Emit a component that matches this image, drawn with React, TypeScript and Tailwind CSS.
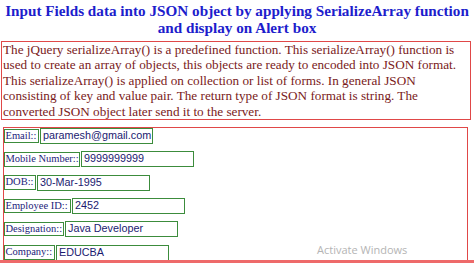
const intro = [
  'The jQuery serializeArray() is a predefined function. This serializeArray() function is',
  'used to create an array of objects, this objects are ready to encoded into JSON format.',
  'This serializeArray() is applied on collection or list of forms. In general JSON',
  'consisting of key and value pair. The return type of JSON format is string. The',
  'converted JSON object later send it to the server.',
];

// label boxes are sized to the original page's rendering
const fields = [
  { label: 'Email::', value: 'paramesh@gmail.com', w: 'w-[35px]' },
  { label: 'Mobile Number::', value: '9999999999', w: 'w-[76px]' },
  { label: 'DOB::', value: '30-Mar-1995', w: 'w-[32px]' },
  { label: 'Employee ID::', value: '2452', w: 'w-[67px]' },
  { label: 'Designation::', value: 'Java Developer', w: 'w-[60px]' },
  { label: 'Company::', value: 'EDUCBA', w: 'w-[51px]' },
];

export default function App() {
  return (
    <div className="relative w-[474px] h-[263px] overflow-hidden bg-white font-['Liberation_Serif',serif]">
      <h1 className="text-center font-bold text-[15.2px] leading-[17px] text-[#1d1dcc] pt-[2px]">
        Input Fields data into JSON object by applying SerializeArray function
        <br />
        and display on Alert box
      </h1>

      <div className="mt-[5px] ml-[1px] w-[470px] border-[1.5px] border-[#e04848] px-[1px] text-[13.2px] leading-[15.4px] text-[#7a1a1a]">
        {intro.map((line) => (
          <div key={line} className="whitespace-nowrap">{line}</div>
        ))}
      </div>

      <div className="mt-[7px] ml-[3px] w-[465px] h-[140px] border-[1.5px] border-[#e04848] flex flex-col gap-[7.3px]">
        {fields.map((f) => (
          <div key={f.label} className="flex items-center gap-[1px]">
            <span className={`${f.w} shrink-0 border-[1.5px] border-[#3c8c3c] px-[0.5px] whitespace-nowrap text-[10.5px] leading-[12.5px] text-[#23237a]`}>
              {f.label}
            </span>
            <span className="w-[113px] h-[16px] shrink-0 border-[1.5px] border-[#3c8c3c] px-[2px] font-['Liberation_Sans',sans-serif] text-[10.8px] leading-[13px] text-[#1a1a70] whitespace-nowrap">
              {f.value}
            </span>
          </div>
        ))}
      </div>

      <div className="absolute left-[317px] top-[242px] font-['Open_Sans',sans-serif] text-[11px] text-[#b4b4b4]">
        Activate Windows
      </div>
      <div className="absolute left-0 bottom-0 w-full h-[3px] bg-[#ee6a6a]" />
    </div>
  );
}
